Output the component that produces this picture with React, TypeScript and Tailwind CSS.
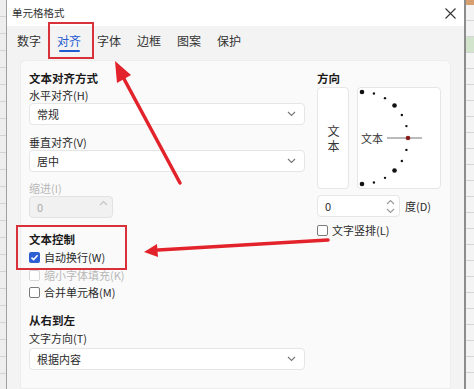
import React from 'react';

const Chevron = ({ up = false, color = '#777' }: { up?: boolean; color?: string }) => (
  <svg width="9" height="6" viewBox="0 0 9 6" fill="none">
    <path d={up ? 'M1 5 L4.5 1.5 L8 5' : 'M1 1 L4.5 4.5 L8 1'} stroke={color} strokeWidth="1.1" />
  </svg>
);

const Select = ({ value }: { value: string }) => (
  <div className="h-[22px] w-[276px] flex items-center justify-between pl-[7px] pr-[8px] bg-white border border-[#e6e6e6] rounded-[4px] text-[11px] text-[#2a2a2a]">
    <span>{value}</span>
    <Chevron />
  </div>
);

const Label = ({ children, className = '' }: { children: React.ReactNode; className?: string }) => (
  <div className={`h-[16px] leading-[16px] text-[11px] text-[#2a2a2a] ${className}`}>{children}</div>
);

const Title = ({ children, className = '' }: { children: React.ReactNode; className?: string }) => (
  <div className={`h-[16px] leading-[16px] text-[11.5px] font-bold text-[#1a1a1a] ${className}`}>{children}</div>
);

const CheckRow = ({ label, checked = false, disabled = false, className = '' }: { label: string; checked?: boolean; disabled?: boolean; className?: string }) => (
  <div className={`h-[17px] flex items-center gap-[4px] ${className}`}>
    {checked ? (
      <div className="w-[11px] h-[11px] rounded-[2px] bg-[#2c5fd4] flex items-center justify-center">
        <svg width="9" height="9" viewBox="0 0 9 9" fill="none">
          <path d="M1.5 4.6 L3.6 6.6 L7.6 2.3" stroke="white" strokeWidth="1.5" />
        </svg>
      </div>
    ) : (
      <div className={`w-[11px] h-[11px] rounded-[2px] bg-white border ${disabled ? 'border-[#d6d6d6]' : 'border-[#7a7a7a]'}`} />
    )}
    <span className={`text-[11px] leading-[15px] ${disabled ? 'text-[#b8b8b8]' : 'text-[#2a2a2a]'}`}>{label}</span>
  </div>
);

const dots = [-90, -75, -60, -45, -30, -15, 15, 30, 45, 60, 75, 90];

export default function App() {
  return (
    <div className="relative w-[474px] h-[389px] overflow-hidden flex bg-[#f2f2f2] font-['Noto_Sans_CJK_SC',sans-serif]">
      {/* sheet behind, left */}
      <div className="w-[7px] h-full flex flex-col border-r border-[#a0a0a0] bg-[#eeeeee]">
        {[0, 1, 2, 3, 4, 5, 6, 7, 8, 9, 10, 11, 12, 13, 14, 15, 16, 17, 18, 19, 20, 21, 22, 23].map((i) => (
          <div key={i} className="h-[17px] shrink-0 border-b border-[#d4d4d4]" />
        ))}
      </div>

      {/* dialog */}
      <div className="w-[457px] h-full flex flex-col bg-[#f3f3f3]">
        <div className="h-[26px] shrink-0 bg-white flex items-center justify-between pl-[5px] pr-[8px]">
          <span className="text-[10.5px] text-[#333]">单元格格式</span>
          <svg width="11" height="11" viewBox="0 0 11 11" fill="none">
            <path d="M0.5 0.5 L10.5 10.5 M10.5 0.5 L0.5 10.5" stroke="#333" strokeWidth="1.1" />
          </svg>
        </div>

        <div className="h-[34px] shrink-0 flex items-start pl-[10px] gap-[16px] pt-[7px]">
          {['数字', '对齐', '字体', '边框', '图案', '保护'].map((t) => (
            <div key={t} className="flex flex-col items-center">
              <span className={`h-[16px] leading-[16px] text-[12px] ${t === '对齐' ? 'text-[#1f5bd0]' : 'text-[#333]'}`}>{t}</span>
              {t === '对齐' && <div className="mt-[1px] w-[21px] h-[2px] rounded-full bg-[#1f5bd0]" />}
            </div>
          ))}
        </div>

        <div className="flex-1 ml-[13px] mr-[13px] bg-[#fafafa] border border-[#ededed] rounded-t-[6px] flex gap-[12px] pl-[8px] pt-[9px]">
          {/* left column */}
          <div className="w-[276px] flex flex-col">
            <Title>文本对齐方式</Title>
            <Label className="mt-[1px]">水平对齐(H)</Label>
            <Select value="常规" />
            <Label className="mt-[9px] h-[15px]">垂直对齐(V)</Label>
            <Select value="居中" />
            <Label className="mt-[8px] text-[#b8b8b8]">缩进(I)</Label>
            <div className="h-[22px] w-[84px] flex items-center justify-between pl-[7px] pr-[4px] bg-[#f1f1f1] border border-[#e2e2e2] rounded-[4px] text-[11px] text-[#aaa]">
              <span>0</span>
              <div className="pb-[8px]"><Chevron up color="#c4c4c4" /></div>
            </div>
            <Title className="mt-[13px]">文本控制</Title>
            <CheckRow className="mt-[2px]" label="自动换行(W)" checked />
            <CheckRow className="mt-[1px]" label="缩小字体填充(K)" disabled />
            <CheckRow label="合并单元格(M)" />
            <Title className="mt-[11px]">从右到左</Title>
            <Label className="mt-[2px]">文字方向(T)</Label>
            <div className="mt-[2px]"><Select value="根据内容" /></div>
          </div>

          {/* right column */}
          <div className="w-[124px] flex flex-col">
            <Title>方向</Title>
            <div className="mt-[1px] h-[102px] flex gap-[8px]">
              <div className="w-[32px] h-full bg-white border border-[#e6e6e6] rounded-[4px] flex items-center justify-center pt-[3px]">
                <span className="[writing-mode:vertical-rl] text-[12px] leading-[14px] tracking-[3px] text-[#333]">文本</span>
              </div>
              <div className="relative w-[84px] h-full bg-white border border-[#e6e6e6] rounded-[4px]">
                <svg className="absolute left-[-1px] top-[-1px]" width="84" height="102" viewBox="0 0 84 102">
                  {dots.map((a) => {
                    const r = (a * Math.PI) / 180;
                    const x = 5 + 46 * Math.cos(r);
                    const y = 51 + 46 * Math.sin(r);
                    return <circle key={a} cx={x} cy={y} r={a % 45 === 0 ? 2.3 : 1.2} fill="#111" />;
                  })}
                  <line x1="30" y1="51" x2="65" y2="51" stroke="#777" strokeWidth="1" />
                  <circle cx="51" cy="51" r="2.3" fill="#8a1c1c" />
                </svg>
                <span className="absolute left-[3px] top-[43px] text-[11px] leading-[15px] text-[#333]">文本</span>
              </div>
            </div>
            <div className="mt-[6px] flex items-center gap-[5px]">
              <div className="h-[22px] w-[83px] flex items-center justify-between pl-[7px] pr-[4px] bg-white border border-[#e6e6e6] rounded-[4px] text-[11px] text-[#2a2a2a]">
                <span>0</span>
                <div className="flex flex-col gap-[3px]">
                  <Chevron up color="#999" />
                  <Chevron color="#999" />
                </div>
              </div>
              <span className="text-[11px] text-[#2a2a2a]">度(D)</span>
            </div>
            <CheckRow className="mt-[5px]" label="文字竖排(L)" />
          </div>
        </div>
      </div>

      {/* sheet behind, right */}
      <div className="w-[10px] h-full flex flex-col border-l-2 border-[#8c8c8c] bg-[#f4f4f4]">
        <div className="h-[5px] shrink-0 bg-[#d8a070]" />
        {[0, 1, 2, 3, 4, 5, 6, 7, 8, 9, 10, 11, 12, 13, 14, 15, 16, 17, 18, 19, 20, 21, 22].map((i) => (
          <div key={i} className={`h-[16px] shrink-0 border-b border-[#d6d6d6] ${i === 2 ? 'bg-[#d3e4cc]' : ''}`} />
        ))}
      </div>

      {/* annotations */}
      <svg className="absolute inset-0 pointer-events-none" width="474" height="389" viewBox="0 0 474 389">
        <rect x="49" y="23" width="44" height="35" fill="none" stroke="#d8313a" strokeWidth="2" />
        <rect x="17" y="226" width="109" height="43" fill="none" stroke="#d8313a" strokeWidth="2" />
        <line x1="180" y1="183" x2="123" y2="77" stroke="#e3232b" strokeWidth="3.5" strokeLinecap="round" />
        <polygon points="115,61 131,75 117,83" fill="#e3232b" />
        <line x1="328" y1="240" x2="158" y2="250" stroke="#e3232b" strokeWidth="3.5" strokeLinecap="round" />
        <polygon points="144,252 157,244 158,257" fill="#e3232b" />
      </svg>
    </div>
  );
}
